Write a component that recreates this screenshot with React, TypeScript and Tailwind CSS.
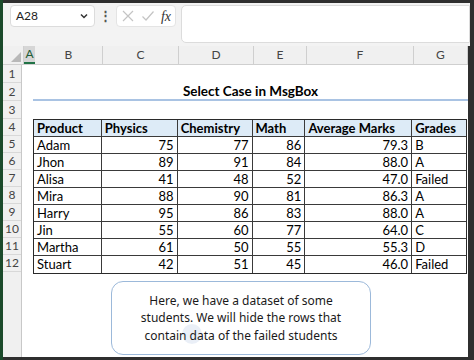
import React from 'react'

const cols = [
  { name: 'B', w: 'w-[68px]' },
  { name: 'C', w: 'w-[76px]' },
  { name: 'D', w: 'w-[75px]' },
  { name: 'E', w: 'w-[53px]' },
  { name: 'F', w: 'w-[107px]' },
  { name: 'G', w: 'w-[54px]' },
]

const heads = ['Product', 'Physics', 'Chemistry', 'Math', 'Average Marks', 'Grades']

const rows = [
  ['Adam', '75', '77', '86', '79.3', 'B'],
  ['Jhon', '89', '91', '84', '88.0', 'A'],
  ['Alisa', '41', '48', '52', '47.0', 'Failed'],
  ['Mira', '88', '90', '81', '86.3', 'A'],
  ['Harry', '95', '86', '83', '88.0', 'A'],
  ['Jin', '55', '60', '77', '64.0', 'C'],
  ['Martha', '61', '50', '55', '55.3', 'D'],
  ['Stuart', '42', '51', '45', '46.0', 'Failed'],
]

const App = () => {
  return (
    <div
      className="w-[474px] h-[360px] overflow-hidden bg-[#2f2f2f] pt-[3px] pb-[3px] pr-[4px] border-l-[3px] border-[#1b4a2b] flex flex-col"
      style={{ fontFamily: 'Lato, "Liberation Sans", sans-serif' }}
    >
      {/* formula bar */}
      <div className="h-[43px] bg-[#f3f3f3] flex items-start pt-[2px] pl-[7px] gap-[4px] shrink-0">
        <div className="w-[85px] h-[22px] bg-white border border-[#dcdcdc] rounded-[4px] flex items-center justify-between px-[5px] text-[12px] text-[#222]">
          <span>A28</span>
          <svg width="10" height="10" viewBox="0 0 10 10">
            <path d="M2 3.5 L5 6.5 L8 3.5" fill="none" stroke="#333" strokeWidth="1.5" />
          </svg>
        </div>
        <div className="w-[13px] h-[22px] flex items-center justify-center text-[#555] text-[13px] font-bold">⋮</div>
        <div className="w-[60px] h-[22px] bg-white border border-[#e4e4e4] rounded-[4px] flex items-center justify-between px-[4px]">
          <svg width="14" height="14" viewBox="0 0 14 14">
            <path d="M2 2 L12 12 M12 2 L2 12" stroke="#c4c4c4" strokeWidth="1.2" />
          </svg>
          <svg width="14" height="14" viewBox="0 0 14 14">
            <path d="M1.5 7.5 L5 11 L12.5 2.5" fill="none" stroke="#c4c4c4" strokeWidth="1.2" />
          </svg>
          <span className="italic text-[14px] text-[#333]" style={{ fontFamily: '"Liberation Serif", serif' }}>
            fx
          </span>
        </div>
        <div className="flex-1 h-[38px] ml-[1px] bg-white border border-[#dcdcdc] rounded-l-[5px]" />
      </div>

      {/* sheet */}
      <div className="flex-1 bg-white flex flex-col mr-[2px] relative">
        {/* column headers */}
        <div className="h-[19px] flex bg-[#f0f0f0] border-b border-[#cfcfcf] text-[12px] text-[#444] shrink-0">
          <div className="w-[21px] border-r border-[#cfcfcf] flex items-end justify-end pr-[2px] pb-[2px]">
            <div className="w-0 h-0 border-l-[10px] border-l-transparent border-b-[10px] border-b-[#b8b8b8]" />
          </div>
          <div className="w-[11px] bg-[#d6d6d6] border-b-2 border-[#217346] flex items-center justify-center text-[#1f5c37]">
            A
          </div>
          {cols.map((c) => (
            <div key={c.name} className={`${c.w} border-r border-[#cfcfcf] flex items-center justify-center`}>
              {c.name}
            </div>
          ))}
        </div>

        <div className="flex-1 flex">
          {/* row headers */}
          <div className="w-[21px] bg-[#f0f0f0] border-r border-[#c8c8c8] flex flex-col text-[12px] text-[#444]">
            {[1, 2, 3].map((n) => (
              <div key={n} className="h-[18px] border-b border-[#d8d8d8] flex items-center justify-center">
                {n}
              </div>
            ))}
            {[4, 5, 6, 7, 8, 9, 10, 11, 12].map((n) => (
              <div key={n} className="h-[17px] border-b border-[#d8d8d8] flex items-center justify-center">
                {n}
              </div>
            ))}
          </div>

          {/* cells */}
          <div className="flex-1 flex flex-col pl-[11px]">
            <div className="h-[18px]" />
            <div className="h-[18px] w-[435px] border-b-2 border-[#a9c3e3] flex items-center justify-center text-[13.5px] font-bold text-black">
              Select Case in MsgBox
            </div>
            <div className="h-[18px]" />

            <div className="w-[434px] border border-[#2a2a2a] text-[13px] text-black">
              <div className="h-[17px] flex bg-[#ddebf7] border-b border-[#3a3a3a] font-bold">
                {heads.map((h, i) => (
                  <div
                    key={h}
                    className={`${cols[i].w} ${i < 5 ? 'border-r border-[#3a3a3a]' : ''} flex items-center px-[3px] leading-none`}
                  >
                    {h}
                  </div>
                ))}
              </div>
              {rows.map((r, ri) => (
                <div key={ri} className={`h-[17px] flex ${ri < rows.length - 1 ? 'border-b border-[#3a3a3a]' : ''}`}>
                  {r.map((v, i) => (
                    <div
                      key={i}
                      className={`${cols[i].w} ${i < 5 ? 'border-r border-[#3a3a3a]' : ''} flex items-center px-[3px] leading-none ${
                        i === 0 || i === 5 ? 'justify-start' : 'justify-end'
                      }`}
                    >
                      {v}
                    </div>
                  ))}
                </div>
              ))}
            </div>

            {/* callout */}
            <div
              className="relative mt-[7px] ml-[78px] w-[260px] h-[74px] border border-[#9cb9da] rounded-[12px] flex flex-col items-center justify-center text-[12px] leading-[17.5px] text-[#1a1a1a]"
              style={{ fontFamily: '"Noto Sans", "DejaVu Sans", sans-serif' }}
            >
              {/* faint watermark mark */}
              <svg className="absolute left-[68px] top-[40px]" width="24" height="24" viewBox="0 0 24 24">
                <circle cx="12" cy="12" r="10" fill="#8aa6d0" opacity="0.18" />
              </svg>
              <span className="relative whitespace-nowrap">Here, we have a dataset of some</span>
              <span className="relative whitespace-nowrap">students. We will hide the rows that</span>
              <span className="relative whitespace-nowrap">contain data of the failed students</span>
            </div>
          </div>
        </div>
      </div>
    </div>
  )
}

export default App
